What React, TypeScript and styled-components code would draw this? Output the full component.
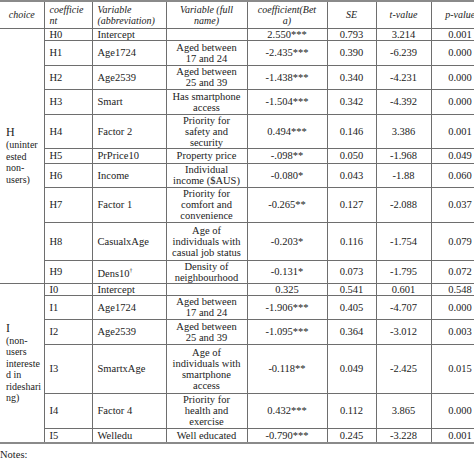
import React from 'react';
import styled, { createGlobalStyle } from 'styled-components';

const GlobalStyle = createGlobalStyle`
  html, body {
    margin: 0;
    padding: 0;
    background: #fff;
    overflow: hidden;
  }
  body {
    font-family: "Liberation Serif", "Times New Roman", serif;
    color: #222;
  }
`;

const SPage = styled.div`
  width: 490px;
`;

const STable = styled.table`
  border-collapse: collapse;
  table-layout: fixed;
  width: 489px;
  border-top: 2px solid #8a8a8a;
  border-bottom: 2px solid #8a8a8a;
  font-size: 10.5px;
  line-height: 11px;
`;

const SRow = styled.tr<{ $h: number }>`
  height: ${(p) => p.$h}px;
`;

const SHead = styled.th<{ $align?: string }>`
  font-weight: normal;
  font-style: italic;
  font-size: 10px;
  text-align: ${(p) => p.$align || 'center'};
  vertical-align: middle;
  padding: 0 ${(p) => (p.$align === 'left' ? '5px' : '2px')};
  border-left: 1px solid #6e6e6e;
  border-bottom: 1px solid #6e6e6e;

  &:first-child {
    border-left: none;
  }
`;

const SGroup = styled.td`
  vertical-align: middle;
  text-align: left;
  padding: 0 0 0 6px;
  border-right: 1px solid #6e6e6e;
  border-bottom: 1px solid #6e6e6e;
  font-size: 10px;
  line-height: 11.5px;
`;

const SGroupLetter = styled.div`
  font-size: 12px;
  line-height: 13px;
`;

const SCell = styled.td<{ $align?: string }>`
  text-align: ${(p) => p.$align || 'center'};
  vertical-align: middle;
  padding: 0 ${(p) => (p.$align === 'left' ? '5px' : '2px')};
  border: 1px solid #6e6e6e;
  white-space: pre-line;
`;

const SNotes = styled.div`
  font-size: 10.5px;
  line-height: 12px;
  padding: 5px 0 0 0;
`;

type Row = {
  id: string;
  abbr: React.ReactNode;
  full: string;
  beta: string;
  se: string;
  t: string;
  p: string;
  h: number;
};

const hRows: Row[] = [
  { id: 'H0', abbr: 'Intercept', full: '', beta: '2.550***', se: '0.793', t: '3.214', p: '0.001', h: 12 },
  { id: 'H1', abbr: 'Age1724', full: 'Aged between\n17 and 24', beta: '-2.435***', se: '0.390', t: '-6.239', p: '0.000', h: 25 },
  { id: 'H2', abbr: 'Age2539', full: 'Aged between\n25 and 39', beta: '-1.438***', se: '0.340', t: '-4.231', p: '0.000', h: 24 },
  { id: 'H3', abbr: 'Smart', full: 'Has smartphone\naccess', beta: '-1.504***', se: '0.342', t: '-4.392', p: '0.000', h: 25 },
  { id: 'H4', abbr: 'Factor 2', full: 'Priority for\nsafety and\nsecurity', beta: '0.494***', se: '0.146', t: '3.386', p: '0.001', h: 34 },
  { id: 'H5', abbr: 'PrPrice10', full: 'Property price', beta: '-.098**', se: '0.050', t: '-1.968', p: '0.049', h: 15 },
  { id: 'H6', abbr: 'Income', full: 'Individual\nincome ($AUS)', beta: '-0.080*', se: '0.043', t: '-1.88', p: '0.060', h: 24 },
  { id: 'H7', abbr: 'Factor 1', full: 'Priority for\ncomfort and\nconvenience', beta: '-0.265**', se: '0.127', t: '-2.088', p: '0.037', h: 35 },
  { id: 'H8', abbr: 'CasualxAge', full: 'Age of\nindividuals with\ncasual job status', beta: '-0.203*', se: '0.116', t: '-1.754', p: '0.079', h: 38 },
  {
    id: 'H9',
    abbr: (
      <>
        Dens10<sup style={{ fontSize: '6px' }}>†</sup>
      </>
    ),
    full: 'Density of\nneighbourhood',
    beta: '-0.131*',
    se: '0.073',
    t: '-1.795',
    p: '0.072',
    h: 23,
  },
];

const iRows: Row[] = [
  { id: 'I0', abbr: 'Intercept', full: '', beta: '0.325', se: '0.541', t: '0.601', p: '0.548', h: 12 },
  { id: 'I1', abbr: 'Age1724', full: 'Aged between\n17 and 24', beta: '-1.906***', se: '0.405', t: '-4.707', p: '0.000', h: 24 },
  { id: 'I2', abbr: 'Age2539', full: 'Aged between\n25 and 39', beta: '-1.095***', se: '0.364', t: '-3.012', p: '0.003', h: 25 },
  { id: 'I3', abbr: 'SmartxAge', full: 'Age of\nindividuals with\nsmartphone\naccess', beta: '-0.118**', se: '0.049', t: '-2.425', p: '0.015', h: 49 },
  { id: 'I4', abbr: 'Factor 4', full: 'Priority for\nhealth and\nexercise', beta: '0.432***', se: '0.112', t: '3.865', p: '0.000', h: 35 },
  { id: 'I5', abbr: 'Welledu', full: 'Well educated', beta: '-0.790***', se: '0.245', t: '-3.228', p: '0.001', h: 15 },
];

const Cells: React.FC<{ row: Row }> = ({ row }) => (
  <>
    <SCell $align="left">{row.id}</SCell>
    <SCell $align="left">{row.abbr}</SCell>
    <SCell>{row.full}</SCell>
    <SCell>{row.beta}</SCell>
    <SCell>{row.se}</SCell>
    <SCell>{row.t}</SCell>
    <SCell>{row.p}</SCell>
  </>
);

const Group: React.FC<{ rows: Row[]; letter: string; lines: string[] }> = ({ rows, letter, lines }) => (
  <>
    {rows.map((row, i) => (
      <SRow key={row.id} $h={row.h}>
        {i === 0 && (
          <SGroup rowSpan={rows.length}>
            <SGroupLetter>{letter}</SGroupLetter>
            {lines.map((l) => (
              <div key={l}>{l}</div>
            ))}
          </SGroup>
        )}
        <Cells row={row} />
      </SRow>
    ))}
  </>
);

const App: React.FC = () => (
  <SPage>
    <GlobalStyle />
    <STable>
      <colgroup>
        <col style={{ width: 44 }} />
        <col style={{ width: 48 }} />
        <col style={{ width: 74 }} />
        <col style={{ width: 81 }} />
        <col style={{ width: 80 }} />
        <col style={{ width: 49 }} />
        <col style={{ width: 55 }} />
        <col style={{ width: 58 }} />
      </colgroup>
      <thead>
        <SRow $h={27}>
          <SHead>choice</SHead>
          <SHead $align="left">
            coefficie
            <br />
            nt
          </SHead>
          <SHead $align="left">
            Variable
            <br />
            (abbreviation)
          </SHead>
          <SHead>
            Variable (full
            <br />
            name)
          </SHead>
          <SHead>
            coefficient(Bet
            <br />
            a)
          </SHead>
          <SHead>SE</SHead>
          <SHead>t-value</SHead>
          <SHead>p-value</SHead>
        </SRow>
      </thead>
      <tbody>
        <Group rows={hRows} letter="H" lines={['(uninter', 'ested', 'non-', 'users)']} />
        <Group rows={iRows} letter="I" lines={['(non-', 'users', 'intereste', 'd in', 'rideshari', 'ng)']} />
      </tbody>
    </STable>
    <SNotes>Notes:</SNotes>
  </SPage>
);

export default App;
